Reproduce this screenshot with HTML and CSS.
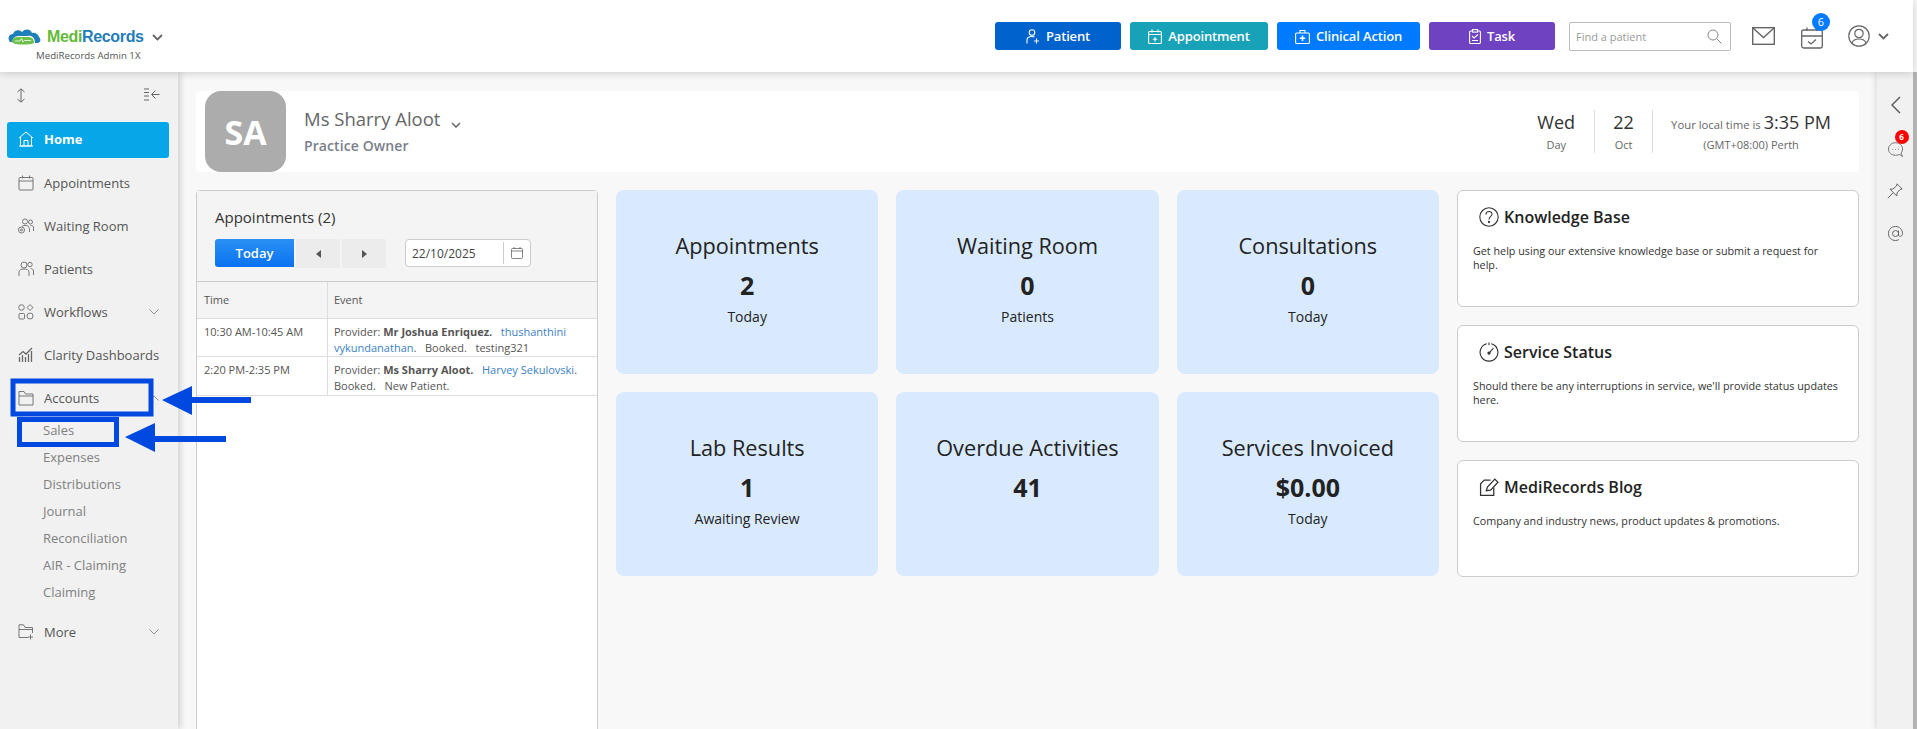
FILE: index.html
```html
<!DOCTYPE html>
<html lang="en">
<head>
  <meta charset="UTF-8" />
  <title>MediRecords</title>
  <link rel="stylesheet" href="styles.css">
</head>
<body>
<header class="topbar">
  <div class="brand">
    <div class="brand-row">
      <svg class="brand-cloud" width="33" height="18" viewBox="0 0 33 18">
        <path d="M2 14C-1 10 1 6 5 6C6 2 11 1 14 4C17 0 23 1 24 5C27 4 30 6 31 9C33 11 33 14 30 15H27C27 10 24 7 20 8H11C7 8 5 10 4 14Z" fill="#1f7fb8"/>
        <path d="M4 14C4 10 7 9 11 9H20C24 9 26 11 26 15C24 16 21 16.500 15 16.500C9 16.500 6 16 4 14Z" fill="#6cc04a"/>
        <path d="M7 13H12L13.500 10.500L15 14L16.500 12.500H23" fill="none" stroke="#fff" stroke-width="0.8"/>
      </svg>
      <span class="brand-name"><span class="brand-medi">Medi</span><span class="brand-records">Records</span></span>
      <svg class="chev" width="11" height="7" viewBox="0 0 11 7"><path d="M1 1L5.500 5.500L10 1" fill="none" stroke="#666" stroke-width="1.800"/></svg>
    </div>
    <div class="brand-sub">MediRecords Admin 1X</div>
  </div>

  <div class="actions">
    <button class="act act-patient">
      <svg width="14" height="15" viewBox="0 0 14 15" fill="none" stroke="#fff" stroke-width="1.100"><circle cx="6" cy="3.500" r="2.800"/><path d="M1 14.500V11C1 8.500 3 7.500 6 7.500C7 7.500 8 7.700 8.500 8"/><path d="M10.500 9.500V14.500M8 12H13"/></svg>
      Patient
    </button>
    <button class="act act-appt">
      <svg width="14" height="15" viewBox="0 0 14 15" fill="none" stroke="#fff" stroke-width="1.100"><rect x="0.600" y="2.500" width="12.800" height="12" rx="1"/><path d="M0.600 5.500H13.400M4 0.500V3.500M10 0.500V3.500M7 8V12.500M4.800 10.200H9.200"/></svg>
      Appointment
    </button>
    <button class="act act-clinical">
      <svg width="15" height="15" viewBox="0 0 15 15" fill="none" stroke="#fff" stroke-width="1.100"><rect x="0.600" y="4" width="13.800" height="10.500" rx="1"/><path d="M5 4V1.500H10V4"/><path d="M7.500 6.500V12M4.800 9.200H10.200" stroke-width="1.600"/></svg>
      Clinical Action
    </button>
    <button class="act act-task">
      <svg width="12" height="15" viewBox="0 0 12 15" fill="none" stroke="#fff" stroke-width="1.100"><rect x="0.600" y="2" width="10.800" height="12.500" rx="1"/><rect x="3.500" y="0.600" width="5" height="2.500" fill="#6f42c1"/><path d="M3 7L5 9L9 5.500M3 11.500H9"/></svg>
      Task
    </button>
    <div class="search">
      <span class="search-text">Find a patient</span>
      <svg width="15" height="15" viewBox="0 0 15 15" fill="none" stroke="#888" stroke-width="1"><circle cx="6" cy="6" r="5"/><path d="M9.700 9.700L14.500 14.500"/></svg>
    </div>
    <svg class="icon-mail" width="23" height="18" viewBox="0 0 23 18" fill="none" stroke="#666" stroke-width="1.400"><rect x="0.700" y="0.700" width="21.600" height="16.600"/><path d="M0.700 0.700L11.500 10.500L22.300 0.700"/></svg>
    <div class="tasks">
      <svg width="22" height="22" viewBox="0 0 22 22" fill="none" stroke="#666" stroke-width="1.300"><rect x="0.700" y="3" width="20.600" height="18" rx="2"/><path d="M0.700 9H21.300M6 0.500V4M16 0.500V4M7 14.500L10 17L15 12.500"/></svg>
      <span class="tasks-badge">6</span>
    </div>
    <svg class="icon-user" width="22" height="22" viewBox="0 0 22 22" fill="none" stroke="#666" stroke-width="1.200"><circle cx="11" cy="11" r="10.200"/><circle cx="11" cy="8.500" r="4.200"/><path d="M4 18C5 15 8 14 11 14C14 14 17 15 18 18"/></svg>
    <svg class="chev" width="11" height="7" viewBox="0 0 11 7"><path d="M1 1L5.500 5.500L10 1" fill="none" stroke="#666" stroke-width="1.800"/></svg>
  </div>
</header>

<div class="shell">
  <aside class="sidebar">
    <div class="side-tools">
      <svg width="10" height="15" viewBox="0 0 10 15" fill="none" stroke="#666" stroke-width="1"><path d="M5 1V14M1.500 4L5 0.800L8.500 4M1.500 11L5 14.200L8.500 11"/></svg>
      <svg width="16" height="13" viewBox="0 0 16 13" fill="none" stroke="#666" stroke-width="1"><path d="M0 1H5M0 4.500H5M0 8H5M0 12H5M15.500 6.500H8M11.500 2.500L7.500 6.500L11.500 10.500"/></svg>
    </div>
    <nav class="side-nav">
      <a class="nav-item nav-home">
        <svg viewBox="0 0 16 16" fill="none" stroke="#fff" stroke-width="1"><path d="M1 7L8 1L15 7M2.500 6V15H13.500V6M6 15V9.500H10V15M1 15H15"/></svg>
        Home
      </a>
      <a class="nav-item">
        <svg viewBox="0 0 16 16" fill="none" stroke="#777" stroke-width="1"><rect x="1" y="2.500" width="14" height="12.500" rx="1"/><path d="M1 6H15M4.500 0.500V3.500M11.500 0.500V3.500"/></svg>
        Appointments
      </a>
      <a class="nav-item">
        <svg viewBox="0 0 16 16" fill="none" stroke="#777" stroke-width="1"><circle cx="7" cy="3.500" r="2.500"/><circle cx="12.500" cy="4" r="2"/><path d="M15.500 13V9C15.500 8 14 7.500 12.500 7.500M4 8.500C5 7 9 7 10.500 8.500C11.500 9.500 11.500 11 11.500 14"/><circle cx="3.500" cy="12" r="3"/><circle cx="3.500" cy="12" r="1"/></svg>
        Waiting Room
      </a>
      <a class="nav-item">
        <svg viewBox="0 0 16 16" fill="none" stroke="#777" stroke-width="1"><circle cx="6" cy="4" r="3"/><circle cx="12" cy="3.500" r="2.200"/><path d="M1 15V11C1 9 3 8 6 8C9 8 11 9 11 11V15M12.500 7.500C14 7.500 15.500 8.500 15.500 10V14"/></svg>
        Patients
      </a>
      <a class="nav-item">
        <svg viewBox="0 0 16 16" fill="none" stroke="#777" stroke-width="1"><circle cx="3.500" cy="3.500" r="2.800"/><path d="M12 0.700L15 3.500L12 6.500L9 3.500Z"/><rect x="1" y="9.500" width="5.500" height="5.500" rx="1"/><circle cx="12" cy="12" r="3"/></svg>
        Workflows
        <svg class="nav-chev" viewBox="0 0 10 6" fill="none" stroke="#777" stroke-width="0.800"><path d="M0.500 0.500L5 5L9.500 0.500"/></svg>
      </a>
      <a class="nav-item">
        <svg viewBox="0 0 16 16" fill="none" stroke="#666" stroke-width="1.300"><path d="M1.500 15V10M4.500 15V8M7.500 15V10M10.500 15V7M13.500 15V4M1 8L5 4.500L8 7L14 1" /></svg>
        Clarity Dashboards
      </a>
      <a class="nav-item">
        <svg viewBox="0 0 16 16" fill="none" stroke="#777" stroke-width="1"><path d="M1 15V1.500H6L7.500 4H15V15ZM1 6H15"/></svg>
        Accounts
        <svg class="nav-chev nav-chev-up" viewBox="0 0 10 6" fill="none" stroke="#777" stroke-width="0.800"><path d="M0.500 0.500L5 5L9.500 0.500"/></svg>
      </a>
      <div class="subnav">
        <a class="sub-item">Sales</a>
        <a class="sub-item">Expenses</a>
        <a class="sub-item">Distributions</a>
        <a class="sub-item">Journal</a>
        <a class="sub-item">Reconciliation</a>
        <a class="sub-item">AIR - Claiming</a>
        <a class="sub-item">Claiming</a>
      </div>
      <a class="nav-item">
        <svg viewBox="0 0 16 16" fill="none" stroke="#777" stroke-width="1"><path d="M10 13.500H1V0.800H5.500L7 3.500H14.500V9M1 5.500H14.500M12.500 10.500V15.500M10 13H15"/></svg>
        More
        <svg class="nav-chev" viewBox="0 0 10 6" fill="none" stroke="#777" stroke-width="0.800"><path d="M0.500 0.500L5 5L9.500 0.500"/></svg>
      </a>
    </nav>
  </aside>

  <main class="main">
    <section class="profile">
      <div class="avatar">SA</div>
      <div class="who">
        <div class="who-name">Ms Sharry Aloot
          <svg width="10" height="6" viewBox="0 0 10 6"><path d="M1 1L5 5L9 1" fill="none" stroke="#666" stroke-width="1.500"/></svg>
        </div>
        <div class="who-role">Practice Owner</div>
      </div>
      <div class="when">
        <div class="when-cell when-day"><div class="when-big">Wed</div><div class="when-small">Day</div></div>
        <div class="when-cell when-date"><div class="when-big">22</div><div class="when-small">Oct</div></div>
        <div class="when-cell when-time">
          <div class="when-line">Your local time is <span class="when-big">3:35 PM</span></div>
          <div class="when-small">(GMT+08:00) Perth</div>
        </div>
      </div>
    </section>

    <div class="columns">
      <section class="appts">
        <div class="appts-head">
          <h2 class="appts-title">Appointments (2)</h2>
          <div class="appts-tools">
            <button class="btn-today">Today</button>
            <button class="btn-nav"><span class="tri tri-left"></span></button>
            <button class="btn-nav"><span class="tri tri-right"></span></button>
            <div class="datebox">
              <span class="datebox-val">22/10/2025</span>
              <span class="datebox-icon">
                <svg width="12" height="12" viewBox="0 0 12 12" fill="none" stroke="#666" stroke-width="0.800"><rect x="0.500" y="1.500" width="11" height="10" rx="1"/><path d="M0.500 4H11.500M3 0V2M9 0V2"/></svg>
              </span>
            </div>
          </div>
        </div>
        <div class="agenda">
          <div class="agenda-row agenda-top"><div class="cell-time">Time</div><div class="cell-event">Event</div></div>
          <div class="agenda-row">
            <div class="cell-time">10:30 AM-10:45 AM</div>
            <div class="cell-event">Provider: <b>Mr Joshua Enriquez.</b> &nbsp; <a class="plink">thushanthini</a> <a class="plink">vykundanathan</a>. &nbsp; Booked. &nbsp; testing321</div>
          </div>
          <div class="agenda-row agenda-last">
            <div class="cell-time">2:20 PM-2:35 PM</div>
            <div class="cell-event">Provider: <b>Ms Sharry Aloot.</b> &nbsp; <a class="plink">Harvey Sekulovski</a>.<br>Booked. &nbsp; New Patient.</div>
          </div>
        </div>
      </section>

      <section class="stats">
        <div class="stat"><div class="stat-title">Appointments</div><div class="stat-num">2</div><div class="stat-sub">Today</div></div>
        <div class="stat"><div class="stat-title">Waiting Room</div><div class="stat-num">0</div><div class="stat-sub">Patients</div></div>
        <div class="stat"><div class="stat-title">Consultations</div><div class="stat-num">0</div><div class="stat-sub">Today</div></div>
        <div class="stat"><div class="stat-title">Lab Results</div><div class="stat-num">1</div><div class="stat-sub">Awaiting Review</div></div>
        <div class="stat"><div class="stat-title">Overdue Activities</div><div class="stat-num">41</div></div>
        <div class="stat"><div class="stat-title">Services Invoiced</div><div class="stat-num">$0.00</div><div class="stat-sub">Today</div></div>
      </section>

      <section class="links">
        <div class="link-card">
          <h3 class="link-title">
            <svg width="20" height="20" viewBox="0 0 20 20" fill="none" stroke="#333" stroke-width="1.100"><circle cx="10" cy="10" r="9.200"/><path d="M7 7.500C7 5.500 8.500 4.500 10 4.500C12 4.500 13.300 6 13 7.500C12.700 9.500 10 9.500 10 12.500"/><circle cx="10" cy="15" r="0.600"/></svg>
            Knowledge Base
          </h3>
          <p class="link-text">Get help using our extensive knowledge base or submit a request for help.</p>
        </div>
        <div class="link-card">
          <h3 class="link-title">
            <svg width="20" height="20" viewBox="0 0 18 18" fill="none" stroke="#333" stroke-width="1"><path d="M7 1.500A8 8 0 1 0 11 1.500"/><path d="M9 0.500V3M9 10L13 5.500M14.500 3.500L16 5" /><circle cx="9" cy="10" r="1" fill="#333"/></svg>
            Service Status
          </h3>
          <p class="link-text">Should there be any interruptions in service, we'll provide status updates here.</p>
        </div>
        <div class="link-card">
          <h3 class="link-title">
            <svg width="20" height="20" viewBox="0 0 19 19" fill="none" stroke="#333" stroke-width="1.200"><path d="M14 10V17.500H1.500V6.500L5 3H11"/><path d="M7 13L8 9.500L15 2L18 5L11 12.500Z"/></svg>
            MediRecords Blog
          </h3>
          <p class="link-text">Company and industry news, product updates &amp; promotions.</p>
        </div>
      </section>
    </div>
  </main>

  <aside class="rail">
    <svg width="11" height="18" viewBox="0 0 11 18" fill="none" stroke="#555" stroke-width="1.400"><path d="M10 1L2 9L10 17"/></svg>
    <div class="rail-chat">
      <svg width="15" height="15" viewBox="0 0 15 15" fill="none" stroke="#666" stroke-width="0.900"><path d="M11.500 12.500C10.500 13 9 13.300 7.500 13.300C3.500 13.300 0.500 10.800 0.500 7C0.500 3.500 3.500 0.700 7.500 0.700C11.500 0.700 14.500 3.500 14.500 7C14.500 8.500 14 10 13 11L14.500 14.500Z"/><path d="M4.500 7.500H5.200M7.200 7.500H7.900M10 7.500H10.700"/></svg>
      <span class="chat-badge">6</span>
    </div>
    <svg class="rail-pin" width="16" height="16" viewBox="0 0 16 16" fill="none" stroke="#666" stroke-width="1"><path d="M10 0.800L15.200 6L13 6.500L10 10L9.800 13L3 6.200L6 6L9.500 3Z"/><path d="M6 10L0.800 15.200"/></svg>
    <svg class="rail-at" width="15" height="15" viewBox="0 0 15 15" fill="none" stroke="#666" stroke-width="1"><circle cx="7.500" cy="7.500" r="3"/><path d="M10.500 4.500V9C10.500 11 14.500 11 14.500 7.500C14.500 3.500 11.500 0.500 7.500 0.500C3.500 0.500 0.500 3.500 0.500 7.500C0.500 11.500 3.500 14.500 7.500 14.500C9 14.500 10 14.200 11 13.500"/></svg>
  </aside>
  <div class="scrollbar"></div>
</div>

<!-- blue markup drawn over the screenshot -->
<svg class="markup" width="260" height="80" viewBox="0 0 260 80">
  <rect x="13" y="3" width="138" height="33" fill="none" stroke="#0049e0" stroke-width="5"/>
  <rect x="19.500" y="41.500" width="97" height="25" fill="none" stroke="#0049e0" stroke-width="5"/>
  <path d="M162 22L192 8V19H251V25H192V37Z" fill="#0049e0"/>
  <path d="M125 59L155 45V58H226V64H155V74Z" fill="#0049e0"/>
</svg>
</body>
</html>
```
FILE: styles.css
```css
* {
  margin: 0;
  padding: 0;
  box-sizing: border-box;
}

html, body {
  height: 729px;
  overflow: hidden;
}

body {
  font-family: 'Open Sans', sans-serif;
  background: #f8f8f8;
  color: #333;
  display: flex;
  flex-direction: column;
  position: relative;
}

button {
  font-family: inherit;
  border: none;
  cursor: pointer;
}

/* top bar */
.topbar {
  height: 72px;
  margin-right: 4px;
  flex: none;
  background: #fff;
  box-shadow: 0 1px 8px rgba(0, 0, 0, 0.18);
  display: flex;
  align-items: center;
  justify-content: space-between;
  position: relative;
  z-index: 3;
}

.brand {
  padding: 25px 0 0 8px;
  align-self: flex-start;
}

.brand-row {
  display: flex;
  align-items: center;
  height: 24px;
}

.brand-cloud {
  margin-right: 6px;
}

.brand-name {
  font-family: 'Liberation Sans', sans-serif;
  font-weight: bold;
  font-size: 16px;
  letter-spacing: -0.35px;
}

.brand-medi {
  color: #63b938;
}

.brand-records {
  color: #1f7db8;
}

.brand-row .chev {
  margin-left: 8px;
}

.brand-sub {
  font-size: 9.7px;
  line-height: 14px;
  margin-left: 28px;
  color: #555;
}

.actions {
  display: flex;
  align-items: center;
  padding-right: 24px;
  height: 100%;
}

.act {
  height: 28px;
  border-radius: 3px;
  color: #fff;
  font-size: 13px;
  font-weight: 600;
  letter-spacing: -0.15px;
  display: flex;
  align-items: center;
  justify-content: center;
  gap: 6px;
  margin-right: 9px;
}

.act-patient { width: 126px; background: #0062cc; }
.act-appt { width: 138px; background: #17a2b8; }
.act-clinical { width: 143px; background: #007bff; }
.act-task { width: 126px; background: #6f42c1; margin-right: 14px; }

.search {
  width: 162px;
  height: 29px;
  border: 1px solid #bbb;
  border-radius: 2px;
  display: flex;
  align-items: center;
  justify-content: space-between;
  padding: 0 8px 0 6px;
  margin-right: 21px;
}

.search-text {
  font-size: 11px;
  color: #999;
}

.icon-mail {
  margin-right: 26px;
}

.tasks {
  position: relative;
  width: 22px;
  height: 22px;
  margin: 4px 25px 0 0;
}

.tasks-badge {
  position: absolute;
  top: -14px;
  left: 11px;
  width: 18px;
  height: 18px;
  border-radius: 50%;
  background: #007bff;
  color: #fff;
  font-size: 11px;
  line-height: 18px;
  text-align: center;
}

.icon-user {
  margin-right: 8px;
}

/* below the top bar */
.shell {
  flex: 1;
  display: flex;
  min-height: 0;
}

.sidebar {
  width: 178px;
  flex: none;
  background: #f1f1f1;
  box-shadow: 3px 0 6px rgba(0, 0, 0, 0.14);
  position: relative;
  z-index: 2;
}

.side-tools {
  height: 50px;
  display: flex;
  justify-content: space-between;
  padding: 16px 18px 0 16px;
  align-items: flex-start;
}

.side-nav {
  padding: 0 9px 0 7px;
}

.nav-item {
  height: 43px;
  display: flex;
  align-items: center;
  gap: 10px;
  padding: 0 0 1px 11px;
  font-size: 13px;
  font-weight: 500;
  color: #555;
}

.nav-item svg {
  width: 16px;
  height: 16px;
  flex: none;
}

.nav-item .nav-chev {
  width: 10px;
  height: 6px;
  margin-left: auto;
  margin-right: 10px;
}

.nav-item .nav-chev-up {
  transform: rotate(180deg);
}

.nav-home {
  height: 36px;
  margin-bottom: 4px;
  padding-bottom: 3px;
  background: #06a7e8;
  border-radius: 3px;
  color: #fff;
  font-weight: 700;
}

.subnav {
  margin-top: -3px;
  padding-bottom: 5px;
}

.sub-item {
  display: block;
  height: 27px;
  line-height: 27px;
  padding-left: 36px;
  font-size: 13px;
  font-weight: 500;
  color: #808080;
}

/* main column */
.main {
  flex: 1;
  min-width: 0;
  padding: 19px 18px 0;
  display: flex;
  flex-direction: column;
  gap: 18px;
}

.profile {
  height: 81px;
  flex: none;
  background: #fff;
  border-radius: 4px;
  display: flex;
  align-items: center;
  padding-left: 9px;
}

.avatar {
  width: 81px;
  height: 81px;
  border-radius: 16px;
  background: #acacac;
  color: #fff;
  font-size: 34px;
  font-weight: 700;
  display: flex;
  align-items: center;
  justify-content: center;
  margin-right: 18px;
}

.who-name {
  font-size: 18.500px;
  line-height: 24px;
  color: #666;
  font-weight: 500;
}

.who-name svg {
  margin-left: 6px;
  vertical-align: -2px;
}

.who-role {
  font-size: 14px;
  line-height: 20px;
  letter-spacing: 0.1px;
  margin-top: 5px;
  font-weight: 600;
  color: #7a7f8a;
}

.when {
  margin-left: auto;
  display: flex;
  height: 43px;
  padding-right: 28px;
}

.when-cell {
  text-align: center;
}

.when-big {
  font-size: 18px;
  line-height: 24px;
  color: #333;
}

.when-small {
  font-size: 11px;
  line-height: 21px;
  color: #666;
}

.when-day {
  padding-right: 19px;
  border-right: 1px solid #ddd;
}

.when-date {
  width: 58px;
  border-right: 1px solid #ddd;
}

.when-time {
  padding-left: 18px;
}

.when-line {
  display: flex;
  align-items: baseline;
  justify-content: center;
  gap: 3px;
  height: 24px;
  font-size: 11.300px;
  line-height: 24px;
  color: #666;
}

.columns {
  flex: 1;
  min-height: 0;
  display: flex;
  gap: 18px;
}

/* appointments list */
.appts {
  width: 402px;
  flex: none;
  height: 560px;
  background: #fff;
  border: 1px solid #ccc;
  border-radius: 4px 4px 0 0;
}

.appts-head {
  height: 91px;
  background: #f4f4f4;
  padding: 15px 18px 0;
  border-bottom: 1px solid #ccc;
}

.appts-title {
  font-size: 15px;
  line-height: 22px;
  font-weight: 500;
  color: #333;
}

.appts-tools {
  display: flex;
  margin-top: 11px;
}

.btn-today {
  width: 79px;
  height: 28px;
  background: linear-gradient(#2b90f5, #0a72f0);
  border-radius: 3px 0 0 3px;
  color: #fff;
  font-size: 13px;
  font-weight: 600;
  margin-right: 2px;
}

.btn-nav {
  width: 44px;
  height: 29px;
  background: #ececec;
  margin-right: 2px;
  display: flex;
  align-items: center;
  justify-content: center;
}

.tri {
  width: 0;
  height: 0;
  border-top: 4px solid transparent;
  border-bottom: 4px solid transparent;
}

.tri-left {
  border-right: 5px solid #555;
}

.tri-right {
  border-left: 5px solid #555;
}

.datebox {
  width: 126px;
  height: 28px;
  margin-left: 17px;
  background: #fff;
  border: 1px solid #ccc;
  border-radius: 4px;
  display: flex;
  align-items: center;
  font-size: 12px;
  color: #444;
}

.datebox-val {
  flex: 1;
  padding-left: 6px;
}

.datebox-icon {
  width: 27px;
  height: 22px;
  border-left: 1px solid #ccc;
  display: flex;
  align-items: center;
  justify-content: center;
}

.agenda-row {
  display: flex;
  font-size: 11px;
  line-height: 16px;
  color: #555;
  border-bottom: 1px solid #ddd;
  height: 38px;
}

.agenda-top {
  height: 37px;
  background: #f4f4f4;
  line-height: 35px;
}

.agenda-last {
  height: 39px;
}

.cell-time {
  width: 131px;
  padding: 5px 0 0 7px;
  border-right: 1px solid #ddd;
  flex: none;
}

.agenda-top .cell-time,
.agenda-top .cell-event {
  padding-top: 0;
}

.cell-event {
  flex: 1;
  padding: 5px 6px 0 6px;
}

.plink {
  color: #3a7fc8;
}

/* stat tiles */
.stats {
  width: 823px;
  flex: none;
  align-self: flex-start;
  display: grid;
  grid-template-columns: repeat(3, 1fr);
  grid-auto-rows: 184px;
  gap: 18px;
}

.stat {
  background: #d9eaff;
  border-radius: 8px;
  text-align: center;
  padding-top: 39px;
  color: #222;
}

.stat-title {
  font-size: 21.700px;
  line-height: 34px;
}

.stat-num {
  font-size: 25px;
  line-height: 36px;
  font-weight: 700;
  margin-top: 4px;
}

.stat-sub {
  font-size: 14px;
  line-height: 20px;
  margin-top: 4px;
}

/* right hand link cards */
.links {
  flex: 1;
  align-self: flex-start;
  display: flex;
  flex-direction: column;
  gap: 18px;
}

.link-card {
  height: 117px;
  background: #fff;
  border: 1px solid #ccc;
  border-radius: 6px;
  padding: 13px 15px 0;
}

.link-title {
  display: flex;
  align-items: center;
  gap: 5px;
  font-size: 16px;
  line-height: 26px;
  font-weight: 600;
  color: #222;
  padding-left: 6px;
}

.link-text {
  font-size: 10.770px;
  line-height: 14px;
  margin-top: 14px;
  color: #333;
}

/* right rail */
.rail {
  width: 36px;
  flex: none;
  background: #f1f1f1;
  box-shadow: -2px 0 5px rgba(0, 0, 0, 0.1);
  display: flex;
  flex-direction: column;
  align-items: center;
  padding-top: 24px;
  position: relative;
  z-index: 1;
}

.rail-chat {
  position: relative;
  width: 15px;
  height: 15px;
  margin-top: 26px;
}

.chat-badge {
  position: absolute;
  top: -10px;
  left: 7px;
  width: 14px;
  height: 14px;
  border-radius: 50%;
  background: #f00;
  color: #fff;
  font-size: 8px;
  font-weight: 700;
  line-height: 14px;
  text-align: center;
}

.rail-pin {
  margin-top: 28px;
}

.rail-at {
  margin-top: 27px;
}

.scrollbar {
  width: 4px;
  flex: none;
  background: #b4b4b4;
}

.markup {
  position: absolute;
  left: 0;
  top: 378px;
  z-index: 5;
}
```
